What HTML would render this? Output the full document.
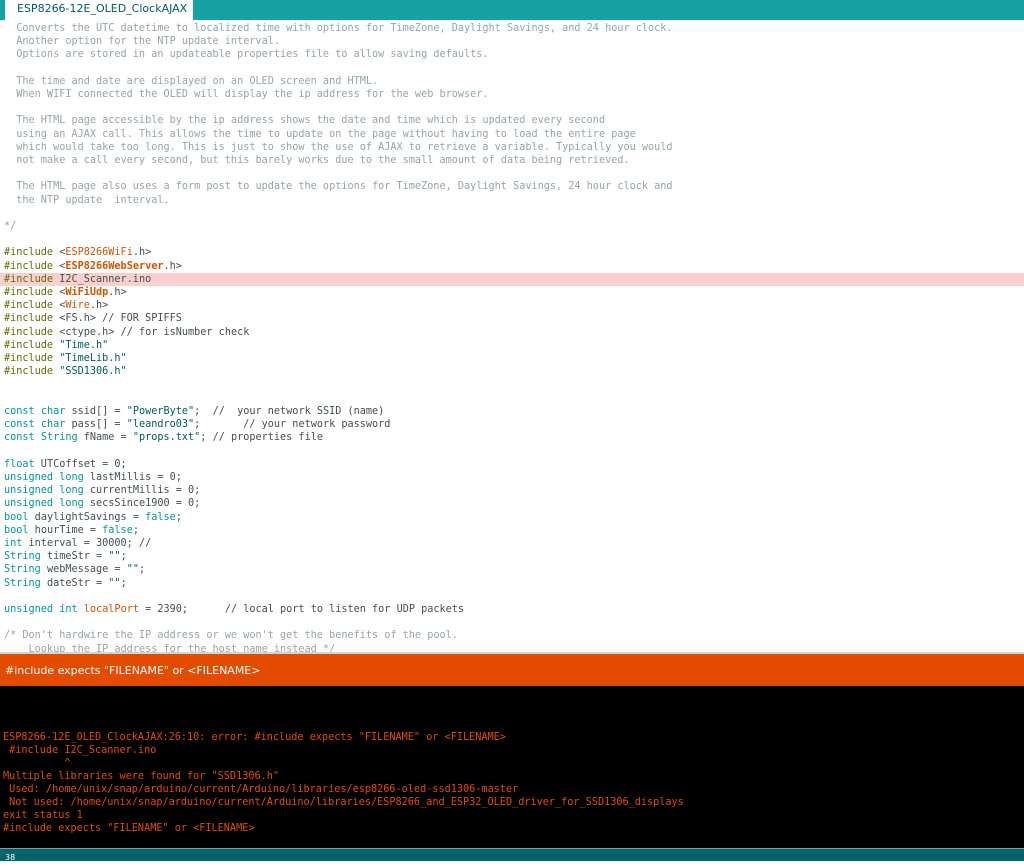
<!DOCTYPE html>
<html><head><meta charset="utf-8"><style>
*{margin:0;padding:0;box-sizing:border-box}
body{width:1024px;height:861px;overflow:hidden;background:#fff;position:relative;font-family:"DejaVu Sans Mono","Liberation Mono",monospace}
#tabs{position:absolute;left:0;top:0;width:1024px;height:20px;background:#17a1a5}
#tab{position:absolute;left:5px;top:0;width:188px;height:20px;background:#fff;color:#005c5f;font:11px "DejaVu Sans",sans-serif;line-height:18px;padding-left:12px}
#ed{position:absolute;left:0;top:20px;width:1024px;height:632px;overflow:hidden;background:#fff}
pre{font-family:"DejaVu Sans Mono",monospace;font-size:10.2px;line-height:13.2px;color:#434f54;padding-left:4px;padding-top:2px;position:relative}
.c{color:#95a5a6}.p{color:#5e6d03}.k{color:#00979c}.s{color:#005c5f}.l{color:#d35400}.b{color:#d35400;font-weight:bold}
.hl{position:absolute;left:0;top:252.8px;width:1024px;height:13.2px;background:#fccfcf}
#div{position:absolute;left:0;top:652px;width:1024px;height:2px;background:#cfd4d6}
#err{position:absolute;left:0;top:654px;width:1024px;height:32px;background:#e34c00;color:#fff;font:11px "DejaVu Sans",sans-serif;line-height:33px;padding-left:5px}
#con{position:absolute;left:0;top:686px;width:1024px;height:162px;background:#000}
#con pre{color:#e34c00;padding-left:3px;padding-top:44.5px;line-height:13.1px;font-size:10.2px}
#sep{position:absolute;left:0;top:848px;width:1024px;height:1px;background:#8a9a9a}
#st{position:absolute;left:0;top:849px;width:1024px;height:12px;background:#006468;color:#fff;font:8px "DejaVu Sans",sans-serif;line-height:18px;padding-left:5px}
</style></head><body>
<div id="tabs"><div id="tab">ESP8266-12E_OLED_ClockAJAX</div></div>
<div id="ed"><div class="hl"></div><pre><span class="c">  Converts the UTC datetime to localized time with options for TimeZone, Daylight Savings, and 24 hour clock.
  Another option for the NTP update interval.
  Options are stored in an updateable properties file to allow saving defaults.

  The time and date are displayed on an OLED screen and HTML.
  When WIFI connected the OLED will display the ip address for the web browser.

  The HTML page accessible by the ip address shows the date and time which is updated every second
  using an AJAX call. This allows the time to update on the page without having to load the entire page
  which would take too long. This is just to show the use of AJAX to retrieve a variable. Typically you would
  not make a call every second, but this barely works due to the small amount of data being retrieved.

  The HTML page also uses a form post to update the options for TimeZone, Daylight Savings, 24 hour clock and
  the NTP update  interval.

*/</span>

<span class="p">#include</span> &lt;<span class="l">ESP8266WiFi</span>.h&gt;
<span class="p">#include</span> &lt;<span class="b">ESP8266WebServer</span>.h&gt;
<span class="p">#include</span> I2C_Scanner.ino
<span class="p">#include</span> &lt;<span class="b">WiFiUdp</span>.h&gt;
<span class="p">#include</span> &lt;<span class="l">Wire</span>.h&gt;
<span class="p">#include</span> &lt;FS.h&gt; // FOR SPIFFS
<span class="p">#include</span> &lt;ctype.h&gt; // for isNumber check
<span class="p">#include</span> <span class="s">"Time.h"</span>
<span class="p">#include</span> <span class="s">"TimeLib.h"</span>
<span class="p">#include</span> <span class="s">"SSD1306.h"</span>


<span class="k">const</span> <span class="k">char</span> ssid[] = <span class="s">"PowerByte"</span>;  //  your network SSID (name)
<span class="k">const</span> <span class="k">char</span> pass[] = <span class="s">"leandro03"</span>;       // your network password
<span class="k">const</span> <span class="k">String</span> fName = <span class="s">"props.txt"</span>; // properties file

<span class="k">float</span> UTCoffset = 0;
<span class="k">unsigned</span> <span class="k">long</span> lastMillis = 0;
<span class="k">unsigned</span> <span class="k">long</span> currentMillis = 0;
<span class="k">unsigned</span> <span class="k">long</span> secsSince1900 = 0;
<span class="k">bool</span> daylightSavings = <span class="k">false</span>;
<span class="k">bool</span> hourTime = <span class="k">false</span>;
<span class="k">int</span> interval = 30000; //
<span class="k">String</span> timeStr = <span class="s">""</span>;
<span class="k">String</span> webMessage = <span class="s">""</span>;
<span class="k">String</span> dateStr = <span class="s">""</span>;

<span class="k">unsigned</span> <span class="k">int</span> <span class="l">localPort</span> = 2390;      // local port to listen for UDP packets

<span class="c">/* Don't hardwire the IP address or we won't get the benefits of the pool.
    Lookup the IP address for the host name instead */</span></pre></div>
<div id="div"></div>
<div id="err">#include expects "FILENAME" or &lt;FILENAME&gt;</div>
<div id="con"><pre>ESP8266-12E_OLED_ClockAJAX:26:10: error: #include expects "FILENAME" or &lt;FILENAME&gt;
 #include I2C_Scanner.ino
          ^
Multiple libraries were found for "SSD1306.h"
 Used: /home/unix/snap/arduino/current/Arduino/libraries/esp8266-oled-ssd1306-master
 Not used: /home/unix/snap/arduino/current/Arduino/libraries/ESP8266_and_ESP32_OLED_driver_for_SSD1306_displays
exit status 1
#include expects "FILENAME" or &lt;FILENAME&gt;</pre></div>
<div id="sep"></div>
<div id="st">38</div>
</body></html>
